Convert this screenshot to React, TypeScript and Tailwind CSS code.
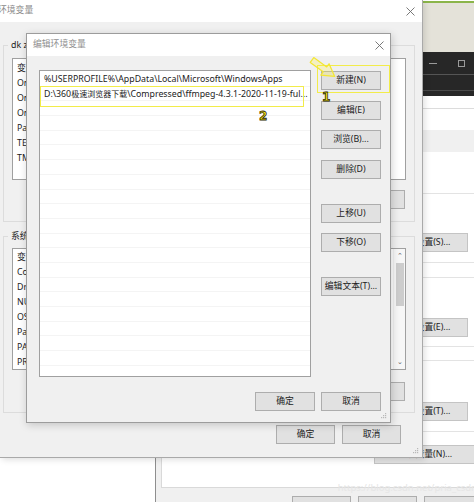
import React from 'react';

const font = "font-['Noto_Sans','Noto_Sans_CJK_SC',sans-serif]";

function Btn({ children, className = '' }: { children?: React.ReactNode; className?: string }) {
  return (
    <div
      className={`flex h-[19px] shrink-0 items-center justify-center whitespace-nowrap border border-[#adadad] bg-[#e1e1e1] text-[8.8px] leading-none text-[#222] ${className}`}
    >
      {children}
    </div>
  );
}

function CloseX({ className = '' }: { className?: string }) {
  return (
    <svg width="9" height="9" viewBox="0 0 9 9" className={className}>
      <path d="M0.5 0.5 L8.5 8.5 M8.5 0.5 L0.5 8.5" stroke="#6b6b6b" strokeWidth="0.9" fill="none" />
    </svg>
  );
}

function Grip() {
  return (
    <svg width="6" height="6" viewBox="0 0 6 6">
      <g fill="#b8b8b8">
        <rect x="4" y="0" width="1.2" height="1.2" />
        <rect x="2" y="2" width="1.2" height="1.2" />
        <rect x="4" y="2" width="1.2" height="1.2" />
        <rect x="0" y="4" width="1.2" height="1.2" />
        <rect x="2" y="4" width="1.2" height="1.2" />
        <rect x="4" y="4" width="1.2" height="1.2" />
      </g>
    </svg>
  );
}

// the window behind everything: system properties, advanced tab
function SystemProps() {
  return (
    <div className="absolute left-[155px] top-[96px] flex h-[420px] w-[330px] flex-col border-l border-[#8e8e8e] bg-[#f0f0f0]">
      <div className="h-[13px] border-b border-[#dcdcdc] bg-white" />
      <div className="h-[21px] bg-white" />
      <div className="h-[22px] bg-[#f0f0f0]" />
      <div className="relative ml-[5px] mr-[4px] flex h-[336px] flex-col border-l border-b border-[#d9d9d9] bg-white pt-[41px] pl-[4px] pr-[5px]">
        <div className="flex h-[70px] flex-col items-end justify-end border border-[#e3e3e3] pb-[10px] pr-[7px]">
          <Btn className="w-[70px] border-[#c4c4c4]">设置(S)...</Btn>
        </div>
        <div className="mt-[14px] flex h-[70px] flex-col items-end justify-end border border-[#e3e3e3] pb-[9px] pr-[7px]">
          <Btn className="w-[70px] border-[#c4c4c4]">设置(E)...</Btn>
        </div>
        <div className="mt-[13px] flex h-[72px] flex-col items-end justify-end border border-[#e3e3e3] pb-[10px] pr-[7px]">
          <Btn className="w-[70px] border-[#c4c4c4]">设置(T)...</Btn>
        </div>
        <div className="mt-[13px] flex justify-end">
          <Btn className="w-[102px] border-[#c4c4c4]">环境变量(N)...</Btn>
        </div>
        {/* watermark */}
        <span className="absolute bottom-[-7px] right-[4px] text-[9.5px] leading-[12px] text-[#e6e6e6]">
          https://blog.csdn.net/pria_csdn
        </span>
      </div>
      <div className="mt-[8px] flex gap-[7px] pl-[136px]">
        <Btn className="w-[59px]" />
        <Btn className="w-[59px]" />
        <Btn className="w-[59px]" />
      </div>
    </div>
  );
}

// a terminal-like window peeking out at the top right
function DarkWindow() {
  return (
    <div className="absolute left-[423px] top-0 flex h-[96px] w-[51px] flex-col bg-white">
      <div className="mt-[1px] h-[2px] bg-[#8bb54a]" />
      <div className="h-[49px] bg-[#e4e2d9]" />
      <div className="flex h-[44px] flex-col bg-[#272727]">
        <div className="flex h-[22px] items-center gap-[21px] pl-[6px]">
          <div className="h-[1px] w-[8px] bg-[#9a9a9a]" />
          <div className="h-[7px] w-[7px] border border-[#9a9a9a]" />
        </div>
        <div className="h-[1px] bg-[#555]" />
        <div className="h-[15px]" />
        <div className="h-[1px] bg-[#4a4a4a]" />
      </div>
    </div>
  );
}

function ListRow({ children }: { children: React.ReactNode }) {
  return <div className="h-[15px] overflow-hidden whitespace-nowrap pl-[4px] text-[8.8px] leading-[15px] text-[#222]">{children}</div>;
}

function EnvWindow() {
  const userVars = ['变量', 'OneDrive', 'OneDriveConsumer', 'OneDriveCommercial', 'Path', 'TEMP', 'TMP'];
  const sysVars = ['变量', 'ComSpec', 'DriverData', 'NUMBER_OF_PROCESSORS', 'OS', 'Path', 'PATHEXT', 'PROCESSOR_ARCHITECTURE'];
  return (
    <div className="absolute left-0 top-0 flex h-[458px] w-[423px] flex-col border-r border-b border-[#a9a9a9] bg-[#f0f0f0] shadow-[2px_2px_6px_rgba(0,0,0,0.12)]">
      <div className="flex h-[22px] items-center justify-between bg-white pr-[7px]">
        <span className="ml-[-2px] text-[8.8px] text-[#8a8a8a]">环境变量</span>
        <CloseX />
      </div>

      {/* user variables */}
      <div className="relative ml-[3px] mt-[23px] h-[177px] w-[412px] border border-[#dcdcdc] px-[8px] pt-[12px]">
        <span className="absolute left-[4px] top-[-8px] bg-[#f0f0f0] px-[3px] text-[8.8px] leading-[14px] text-[#222]">
          dk z
        </span>
        <div className="h-[122px] w-[394px] border border-[#a0a0a0] bg-white pt-[2px]">
          {userVars.map((v) => (
            <ListRow key={v}>{v}</ListRow>
          ))}
        </div>
        <div className="mt-[10px] flex justify-end gap-[8px] pr-[1px]">
          <Btn className="w-[74px]">新建(W)...</Btn>
          <Btn className="w-[74px]">编辑(I)...</Btn>
          <Btn className="w-[74px]">删除(L)</Btn>
        </div>
      </div>

      {/* system variables */}
      <div className="relative ml-[3px] mt-[14px] h-[177px] w-[412px] border border-[#dcdcdc] px-[8px] pt-[11px]">
        <span className="absolute left-[4px] top-[-8px] bg-[#f0f0f0] px-[3px] text-[8.8px] leading-[14px] text-[#222]">
          系统
        </span>
        <div className="flex h-[122px] w-[394px] border border-[#a0a0a0] bg-white">
          <div className="flex-1 pt-[1px]">
            {sysVars.map((v) => (
              <ListRow key={v}>{v}</ListRow>
            ))}
          </div>
          <div className="flex w-[12px] flex-col items-center border-l border-[#f0f0f0] bg-[#f7f7f7]">
            <span className="mt-[2px] text-[7px] leading-[10px] text-[#606060]">⌃</span>
            <div className="mt-[2px] h-[43px] w-[8px] bg-[#cdcdcd]" />
            <span className="mt-auto mb-[2px] text-[7px] leading-[10px] text-[#606060]">⌄</span>
          </div>
        </div>
        <div className="mt-[12px] flex justify-end gap-[8px] pr-[1px]">
          <Btn className="w-[74px]">新建(W)...</Btn>
          <Btn className="w-[74px]">编辑(I)...</Btn>
          <Btn className="w-[74px]">删除(L)</Btn>
        </div>
      </div>

      <div className="mt-[12px] flex justify-end gap-[7px] pr-[21px]">
        <Btn className="w-[59px]">确定</Btn>
        <Btn className="w-[59px]">取消</Btn>
      </div>
      <div className="mt-auto flex justify-end pb-[3px] pr-[3px]">
        <Grip />
      </div>
    </div>
  );
}

function EditWindow() {
  const rows: React.ReactNode[] = [
    '%USERPROFILE%\\AppData\\Local\\Microsoft\\WindowsApps',
    <>
      D:\360<span className="text-[8px]">极速浏览器下载</span>\Compressed\ffmpeg-4.3.1-2020-11-19-ful...
    </>,
    ...Array.from({ length: 19 }, () => ''),
  ];
  return (
    <div className="absolute left-[26px] top-[33px] flex h-[390px] w-[365px] flex-col border border-[#9c9c9c] bg-[#f0f0f0] shadow-[1px_2px_8px_rgba(0,0,0,0.18)]">
      <div className="flex h-[22px] shrink-0 items-center justify-between bg-white pl-[6px] pr-[6px]">
        <span className="text-[8.8px] text-[#8f8f8f]">编辑环境变量</span>
        <CloseX />
      </div>
      <div className="flex gap-[10px] pl-[12px] pt-[14px]">
        <div className="h-[307px] w-[272px] overflow-hidden border border-[#a0a0a0] bg-white pt-[1px]">
          {rows.map((r, i) => (
            <div
              key={i}
              className="h-[14.7px] overflow-hidden whitespace-nowrap border-b border-[#f4f4f4] pl-[4px] text-[8.8px] leading-[14px] text-[#222]"
            >
              {r}
            </div>
          ))}
        </div>
        <div className="flex flex-col pt-[1px]">
          <Btn className="w-[60px]">新建(N)</Btn>
          <Btn className="mt-[11px] w-[60px]">编辑(E)</Btn>
          <Btn className="mt-[10px] w-[60px]">浏览(B)...</Btn>
          <Btn className="mt-[11px] w-[60px]">删除(D)</Btn>
          <Btn className="mt-[25px] w-[60px]">上移(U)</Btn>
          <Btn className="mt-[10px] w-[60px]">下移(O)</Btn>
          <Btn className="mt-[25px] w-[60px]">编辑文本(T)...</Btn>
        </div>
      </div>
      <div className="mt-[15px] flex justify-end gap-[6px] pr-[9px]">
        <Btn className="w-[60px]">确定</Btn>
        <Btn className="w-[60px]">取消</Btn>
      </div>
      <div className="mt-auto flex justify-end pb-[3px] pr-[3px]">
        <Grip />
      </div>
    </div>
  );
}

// yellow markup drawn on top of the screenshot
function Annotations() {
  const num = "font-['DejaVu_Sans',sans-serif] text-[12px] font-bold leading-none text-[#ffe81a] [-webkit-text-stroke:0.8px_#2a2a00]";
  return (
    <>
      <div className="absolute left-[40px] top-[86px] h-[21px] w-[264px] border border-[#f2ec4a]" />
      <div className="absolute left-[317px] top-[65px] h-[28px] w-[73px] border border-[#f2ec4a]" />
      <svg className="absolute left-[308px] top-[50px]" width="34" height="28" viewBox="0 0 34 28">
        <polygon
          points="0,4 16,4 16,0 28,7 16,14 16,10 0,10"
          transform="translate(4 3) rotate(36 0 7)"
          fill="rgba(255,240,60,0.25)"
          stroke="#f3e633"
          strokeWidth="1.2"
          strokeLinejoin="round"
        />
      </svg>
      <span className={`absolute left-[322px] top-[91px] ${num}`}>1</span>
      <span className={`absolute left-[259px] top-[110px] ${num}`}>2</span>
    </>
  );
}

export default function App() {
  return (
    <div className={`relative h-[502px] w-[474px] overflow-hidden bg-white ${font}`}>
      <SystemProps />
      <DarkWindow />
      <EnvWindow />
      <EditWindow />
      <Annotations />
    </div>
  );
}
